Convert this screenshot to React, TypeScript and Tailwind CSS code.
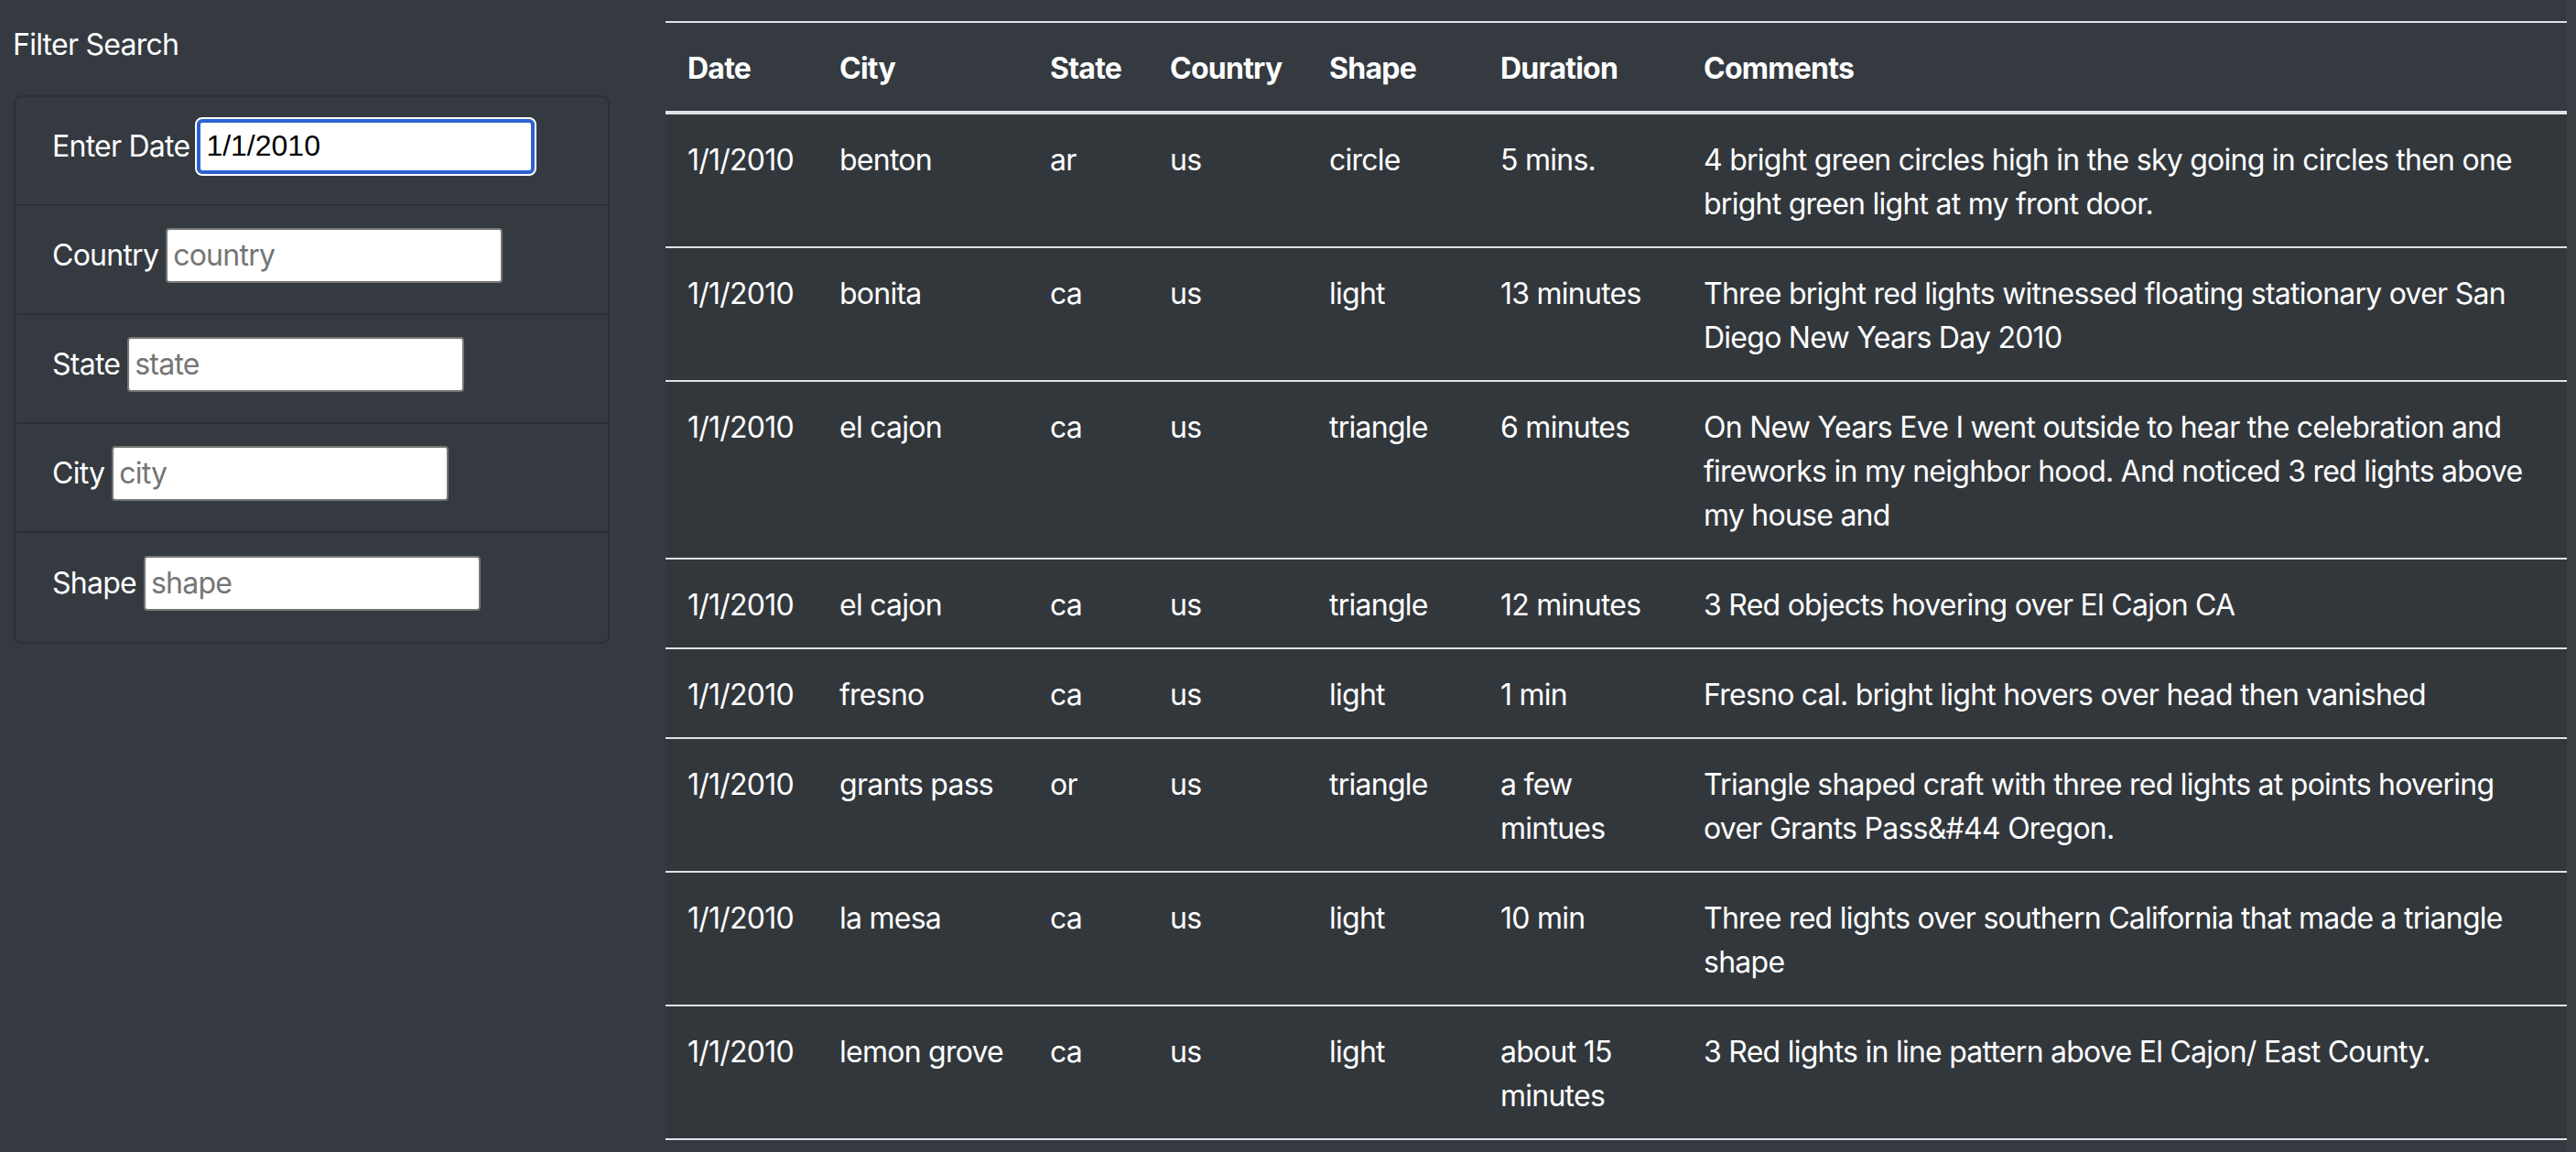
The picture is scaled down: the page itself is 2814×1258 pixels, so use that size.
import React from "react";

type Sighting = {
  date: string;
  city: string;
  state: string;
  country: string;
  shape: string;
  duration: string;
  comments: string;
};

const sightings: Sighting[] = [
  {
    date: "1/1/2010",
    city: "benton",
    state: "ar",
    country: "us",
    shape: "circle",
    duration: "5 mins.",
    comments:
      "4 bright green circles high in the sky going in circles then one bright green light at my front door.",
  },
  {
    date: "1/1/2010",
    city: "bonita",
    state: "ca",
    country: "us",
    shape: "light",
    duration: "13 minutes",
    comments:
      "Three bright red lights witnessed floating stationary over San Diego New Years Day 2010",
  },
  {
    date: "1/1/2010",
    city: "el cajon",
    state: "ca",
    country: "us",
    shape: "triangle",
    duration: "6 minutes",
    comments:
      "On New Years Eve I went outside to hear the celebration and fireworks in my neighbor hood. And noticed 3 red lights above my house and",
  },
  {
    date: "1/1/2010",
    city: "el cajon",
    state: "ca",
    country: "us",
    shape: "triangle",
    duration: "12 minutes",
    comments: "3 Red objects hovering over El Cajon CA",
  },
  {
    date: "1/1/2010",
    city: "fresno",
    state: "ca",
    country: "us",
    shape: "light",
    duration: "1 min",
    comments: "Fresno cal. bright light hovers over head then vanished",
  },
  {
    date: "1/1/2010",
    city: "grants pass",
    state: "or",
    country: "us",
    shape: "triangle",
    duration: "a few mintues",
    comments:
      "Triangle shaped craft with three red lights at points hovering over Grants Pass&#44 Oregon.",
  },
  {
    date: "1/1/2010",
    city: "la mesa",
    state: "ca",
    country: "us",
    shape: "light",
    duration: "10 min",
    comments:
      "Three red lights over southern California that made a triangle shape",
  },
  {
    date: "1/1/2010",
    city: "lemon grove",
    state: "ca",
    country: "us",
    shape: "light",
    duration: "about 15 minutes",
    comments: "3 Red lights in line pattern above El Cajon/ East County.",
  },
];

const filters = [
  { label: "Enter Date", placeholder: "", value: "1/1/2010", focused: true },
  { label: "Country", placeholder: "country", value: "", focused: false },
  { label: "State", placeholder: "state", value: "", focused: false },
  { label: "City", placeholder: "city", value: "", focused: false },
  { label: "Shape", placeholder: "shape", value: "", focused: false },
];

const headers = ["Date", "City", "State", "Country", "Shape", "Duration", "Comments"];

export default function App() {
  return (
    <div
      className="flex min-h-screen items-start bg-[#343a40] text-[32px] leading-[48px] tracking-[-0.75px] text-white"
      style={{ fontFamily: '"Inter", "Liberation Sans", sans-serif' }}
    >
      {/* sidebar */}
      <aside className="ml-[15px] flex w-[651px] shrink-0 flex-col pt-[25px]">
        <h5 className="-ml-[1px] text-[32px] font-normal leading-[48px]">Filter Search</h5>
        <ul className="mt-[31px] overflow-hidden rounded-[8px] border-2 border-[#2b3035]">
          {filters.map((f, i) => (
            <li
              key={f.label}
              className={
                "flex h-[119px] items-center gap-[8px] pl-[40px] pb-[10px] " +
                (i < filters.length - 1 ? "border-b-2 border-[#2b3035]" : "")
              }
            >
              <label htmlFor={f.label} className="whitespace-nowrap">
                {f.label}
              </label>
              {f.focused ? (
                <input
                  id={f.label}
                  type="text"
                  defaultValue={f.value}
                  className="h-[60px] w-[369px] rounded-[6px] border-[4px] border-[#2c62d2] bg-white px-[6px] text-[32px] tracking-normal text-black outline-2 outline-white"
                  style={{ fontFamily: '"Liberation Sans", sans-serif' }}
                />
              ) : (
                <input
                  id={f.label}
                  type="text"
                  placeholder={f.placeholder}
                  className="h-[60px] w-[368px] rounded-[4px] border-2 border-[#767676] bg-white px-[6px] text-[32px] text-black placeholder:text-[#757575]"
                />
              )}
            </li>
          ))}
        </ul>
      </aside>

      {/* results */}
      <main className="ml-[61px] w-[2077px] shrink-0 pt-[23px]">
        <table className="w-full table-fixed border-collapse">
          <colgroup>
            <col className="w-[166px]" />
            <col className="w-[230px]" />
            <col className="w-[131px]" />
            <col className="w-[174px]" />
            <col className="w-[187px]" />
            <col className="w-[222px]" />
            <col className="w-[967px]" />
          </colgroup>
          <thead>
            <tr>
              {headers.map((h) => (
                <th
                  key={h}
                  className="border-t-2 border-b-4 border-[#dee2e6] px-[24px] pt-[26px] pb-[22px] text-left align-bottom font-bold leading-[48px]"
                >
                  {h}
                </th>
              ))}
            </tr>
          </thead>
          <tbody className="bg-[#32373c]">
            {sightings.map((s, i) => (
              <tr key={i} className="border-b-2 border-[#dee2e6]">
                {[s.date, s.city, s.state, s.country, s.shape, s.duration, s.comments].map(
                  (v, j) => (
                    <td
                      key={j}
                      className="border-t-2 border-[#dee2e6] px-[24px] pt-[26px] pb-[22px] align-top leading-[48px]"
                    >
                      {v}
                    </td>
                  )
                )}
              </tr>
            ))}
          </tbody>
        </table>
      </main>
      <div className="ml-auto min-h-screen w-[10px] self-stretch bg-[#3a3f44]" />
    </div>
  );
}
